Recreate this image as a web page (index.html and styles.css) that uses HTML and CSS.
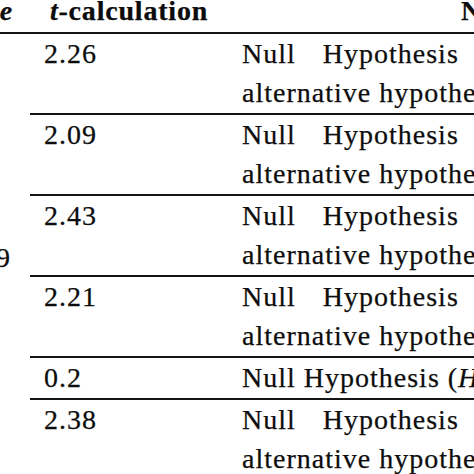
FILE: index.html
```html
<!DOCTYPE html>
<html lang="en">
<head>
<meta charset="utf-8">
<title>t-test results</title>
<link rel="stylesheet" href="styles.css">
</head>
<body>
<div class="frame">
  <table class="results">
    <colgroup>
      <col class="c-table">
      <col class="c-calc">
      <col class="c-note">
    </colgroup>
    <thead>
      <tr>
        <th class="h-table"><em>t-table</em></th>
        <th class="h-calc"><em>t</em>-calculation</th>
        <th class="h-note">Note</th>
      </tr>
    </thead>
    <tbody>
      <tr>
        <td class="tval" rowspan="6">2.069</td>
        <td class="calc">2.26</td>
        <td class="note"><span class="ln wide">Null Hypothesis (<i>H</i><sub>0</sub>) is rejected and</span><span class="ln">alternative hypothesis (<i>H</i><sub>1</sub>) is accepted</span></td>
      </tr>
      <tr>
        <td class="calc">2.09</td>
        <td class="note"><span class="ln wide">Null Hypothesis (<i>H</i><sub>0</sub>) is rejected and</span><span class="ln">alternative hypothesis (<i>H</i><sub>1</sub>) is accepted</span></td>
      </tr>
      <tr>
        <td class="calc">2.43</td>
        <td class="note"><span class="ln wide">Null Hypothesis (<i>H</i><sub>0</sub>) is rejected and</span><span class="ln">alternative hypothesis (<i>H</i><sub>1</sub>) is accepted</span></td>
      </tr>
      <tr>
        <td class="calc">2.21</td>
        <td class="note"><span class="ln wide">Null Hypothesis (<i>H</i><sub>0</sub>) is rejected and</span><span class="ln">alternative hypothesis (<i>H</i><sub>1</sub>) is accepted</span></td>
      </tr>
      <tr>
        <td class="calc">0.2</td>
        <td class="note"><span class="ln">Null Hypothesis (<i>H</i><sub>0</sub>) is accepted</span></td>
      </tr>
      <tr>
        <td class="calc">2.38</td>
        <td class="note"><span class="ln wide">Null Hypothesis (<i>H</i><sub>0</sub>) is rejected and</span><span class="ln">alternative hypothesis (<i>H</i><sub>1</sub>) is accepted</span></td>
      </tr>
    </tbody>
  </table>
</div>
</body>
</html>
```

FILE: styles.css
```css
html, body {
  margin: 0;
  padding: 0;
  background: #ffffff;
}

.frame {
  width: 474px;
  height: 474px;
  overflow: hidden;
}

.results {
  table-layout: fixed;
  width: 853px;
  margin-left: -100px;
  border-collapse: separate;
  border-spacing: 0;
  font-family: "Liberation Serif", "Times New Roman", serif;
  font-size: 28px;
  letter-spacing: 1px;
  color: #0d0d0d;
  -webkit-text-stroke: 0.25px #0d0d0d;
}

.c-table { width: 130px; }
.c-calc { width: 198px; }
.c-note { width: 525px; }

.results th {
  font-weight: bold;
  line-height: 21px;
  padding: 0 0 11px;
  vertical-align: top;
  border-bottom: 2px solid #141414;
  white-space: nowrap;
  letter-spacing: 0.8px;
}

.h-table {
  text-align: right;
  padding-right: 17px !important;
}

.h-calc,
.h-note {
  text-align: center;
}

.results td {
  line-height: 39px;
  vertical-align: top;
  white-space: nowrap;
}

.tval {
  text-align: right;
  vertical-align: middle !important;
  padding-right: 19px;
}

.calc,
.note {
  padding: 0 0 1px 14px;
  border-bottom: 2px solid #141414;
}

.ln {
  display: block;
}

.wide {
  word-spacing: 19px;
}

.note sub {
  font-size: 0.68em;
  line-height: 0;
  vertical-align: -0.2em;
}
```
